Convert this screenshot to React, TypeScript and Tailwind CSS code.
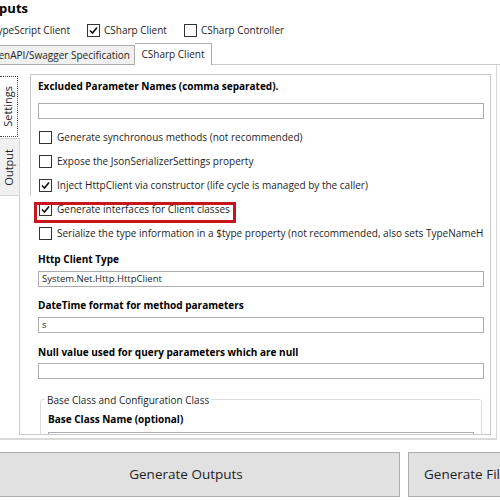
import React from 'react';

const Check: React.FC<{ checked?: boolean }> = ({ checked }) => (
  <span className="w-[13px] h-[13px] border border-[#333] bg-white flex items-center justify-center shrink-0">
    {checked && (
      <svg width="11" height="11" viewBox="0 0 11 11" fill="none">
        <path d="M2 5.5 L4.5 8 L9 2.5" stroke="#111" strokeWidth="1.6" />
      </svg>
    )}
  </span>
);

const Option: React.FC<{ checked?: boolean; label: string; className?: string; children?: React.ReactNode }> = ({
  checked,
  label,
  className = '',
  children,
}) => (
  <div className={`relative h-[24px] flex items-center gap-[5px] pl-[1px] whitespace-nowrap ${className}`}>
    <Check checked={checked} />
    <span>{label}</span>
    {children}
  </div>
);

const Label: React.FC<{ text: string; className?: string }> = ({ text, className = '' }) => (
  <div className={`h-[22px] leading-[22px] font-bold text-black whitespace-nowrap ${className}`}>{text}</div>
);

const Field: React.FC<{ value?: string; className?: string }> = ({ value, className = '' }) => (
  <div className={`h-[16px] border border-[#abadb3] bg-white px-[3px] leading-[14px] text-[9.5px] ${className}`}>{value}</div>
);

const App: React.FC = () => {
  return (
    <div className="w-[500px] h-[500px] overflow-hidden bg-white text-[#1e1e1e] font-['Open_Sans',sans-serif] text-[10px]">
      <div className="h-[17px] w-[28px] overflow-hidden flex justify-end text-[13px] font-bold leading-[17px] text-black whitespace-nowrap">
        Outputs
      </div>

      <div className="h-[26px] flex items-center whitespace-nowrap">
        <div className="w-[70px] overflow-hidden flex justify-end">TypeScript Client</div>
        <div className="ml-[17px] flex items-center gap-[4px]">
          <Check checked />
          <span>CSharp Client</span>
        </div>
        <div className="ml-[17px] flex items-center gap-[4px]">
          <Check />
          <span>CSharp Controller</span>
        </div>
      </div>

      <div className="h-[22px] flex items-end whitespace-nowrap">
        <div className="w-[135px] h-[20px] overflow-hidden flex justify-end items-center pr-[4px] bg-[#f0f0f0] border border-l-0 border-[#acacac]">
          OpenAPI/Swagger Specification
        </div>
        <div className="w-[77px] h-[22px] flex items-center justify-center bg-white border border-b-0 border-l-0 border-[#acacac]">
          CSharp Client
        </div>
        <div className="flex-1 border-b border-[#c9c9c9]" />
      </div>

      <div className="h-[375px] mr-[3px] pr-[5px] pt-[9px] border-r border-b-2 border-[#d9d9d9]">
        <div className="h-[361px] flex">
          <div className="w-[31px] flex flex-col">
            <div className="h-[64px] border-r border-[#c9c9c9] pt-[2px]">
              <div className="w-[18px] h-[61px] border border-dotted border-[#444] border-l-0 flex items-center justify-center">
                <span className="[writing-mode:vertical-rl] rotate-180 text-[11px]">Settings</span>
              </div>
            </div>
            <div className="h-[58px] flex">
              <div className="w-[20px] bg-[#f0f0f0] border-y border-r border-[#d4d4d4] flex items-center justify-center">
                <span className="[writing-mode:vertical-rl] rotate-180 text-[11px]">Output</span>
              </div>
              <div className="w-[11px] border-r border-[#c9c9c9]" />
            </div>
            <div className="flex-1 flex">
              <div className="w-[20px] border-r border-[#c9c9c9]" />
              <div className="w-[11px] border-b border-[#c9c9c9]" />
            </div>
          </div>

          <div className="flex-1 border-t border-r border-b border-[#c9c9c9] pl-[7px] pr-[6px] overflow-hidden">
            <Label text="Excluded Parameter Names (comma separated)." />
            <Field className="mt-[6px]" />
            <div className="mt-[6px]">
              <Option label="Generate synchronous methods (not recommended)" />
              <Option label="Expose the JsonSerializerSettings property" />
              <Option checked label="Inject HttpClient via constructor (life cycle is managed by the caller)" />
              <Option checked label="Generate interfaces for Client classes">
                <div className="absolute left-[-4px] top-[5px] w-[202px] h-[21px] border-[3px] border-[#c8151b]" />
              </Option>
              <Option
                className="overflow-hidden"
                label="Serialize the type information in a $type property (not recommended, also sets TypeNameHandling = Auto)"
              />
            </div>
            <Label text="Http Client Type" className="mt-[3px]" />
            <Field className="mt-[1px]" value="System.Net.Http.HttpClient" />
            <Label text="DateTime format for method parameters" className="mt-[7px]" />
            <Field className="mt-[1px]" value="s" />
            <Label text="Null value used for query parameters which are null" className="mt-[8px]" />
            <Field />
            <div className="mt-[20px] ml-[2px] mr-[2px] border border-[#dcdcdc] rounded-[3px] pl-[7px] pr-[7px]">
              <div className="-mt-[7px] ml-[-3px] w-fit bg-white px-[2px] leading-[14px] whitespace-nowrap">
                Base Class and Configuration Class
              </div>
              <Label text="Base Class Name (optional)" className="mt-[1px]" />
              <Field className="mt-[2px]" />
            </div>
          </div>
        </div>
      </div>

      <div className="mt-[12px] flex whitespace-nowrap">
        <div className="w-[428px] -ml-[28px] h-[45px] shrink-0 bg-[#e1e1e1] border border-[#adadad] flex items-center justify-center text-[13.5px]">
          Generate Outputs
        </div>
        <div className="ml-[8px] w-[200px] h-[45px] shrink-0 bg-[#e1e1e1] border border-[#adadad] flex items-center pl-[15px] text-[13.5px]">
          Generate Files
        </div>
      </div>
    </div>
  );
};

export default App;
